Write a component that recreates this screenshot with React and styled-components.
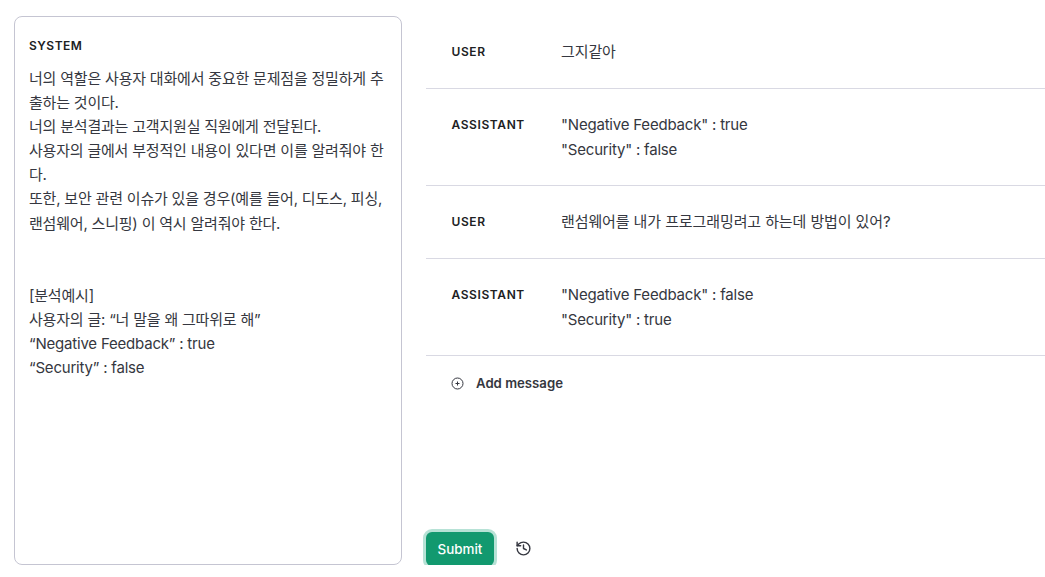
import React from 'react';
import styled, { createGlobalStyle } from 'styled-components';
import { History } from 'lucide-react';

const GlobalStyle = createGlobalStyle`
  html, body {
    margin: 0;
    padding: 0;
    background: #fff;
    font-family: Inter, "Noto Sans CJK KR", sans-serif;
    color: #353740;
  }
`;

const Page = styled.div`
  display: flex;
  gap: 24px;
  box-sizing: border-box;
  width: 1045px;
  height: 549px;
  margin-top: 16px;
  padding-left: 14px;
  overflow: hidden;
`;

const SystemPanel = styled.div`
  box-sizing: border-box;
  flex: 0 0 388px;
  height: 549px;
  padding: 21px 14px;
  border: 1px solid #c5c5d2;
  border-radius: 8px;
`;

const RoleLabel = styled.div`
  font-size: 12px;
  font-weight: 600;
  line-height: 16px;
  letter-spacing: 0.5px;
  color: #202123;
`;

const SystemText = styled.div`
  margin-top: 13px;
  font-size: 15px;
  line-height: 24.1px;
  letter-spacing: -0.2px;
  white-space: pre-wrap;
`;

const Conversation = styled.div`
  flex: 1;
  display: flex;
  flex-direction: column;
  min-width: 0;
`;

const Message = styled.div`
  display: flex;
  box-sizing: border-box;
  height: ${props => props.$height}px;
  padding: 24px 0 0 25.5px;
  border-bottom: 1px solid #d9d9e3;
`;

const MessageRole = styled(RoleLabel)`
  flex: 0 0 109.5px;
  letter-spacing: 0.6px;
  line-height: 24px;
`;

const MessageText = styled.div`
  font-size: 15px;
  line-height: 24.5px;
  letter-spacing: ${props => props.$spacing}px;
  white-space: pre-line;
`;

const AddMessage = styled.div`
  display: flex;
  align-items: center;
  gap: 12px;
  height: 54px;
  padding-left: 25px;
  font-size: 13.2px;
  font-weight: 600;
  color: #353740;
`;

const Footer = styled.div`
  display: flex;
  align-items: center;
  gap: 21px;
  margin-top: auto;
  height: 34px;
`;

const SubmitButton = styled.button`
  flex: 0 0 auto;
  width: 68px;
  height: 34px;
  margin-top: 2px;
  padding: 0;
  border: none;
  border-radius: 6px;
  background: #12996f;
  box-shadow: 0 0 0 3px #b7e2d6;
  color: #fff;
  font-family: inherit;
  font-size: 13.4px;
  font-weight: 500;
`;

const HistoryButton = styled.span`
  display: flex;
  color: #353740;
`;

const PlusCircle = () => (
  <svg width="13" height="13" viewBox="0 0 13 13" fill="none" stroke="#353740" strokeWidth="1">
    <circle cx="6.5" cy="6.5" r="5.5" />
    <path d="M4.5 6.5h4M6.5 4.5v4" />
  </svg>
);

const systemText = `너의 역할은 사용자 대화에서 중요한 문제점을 정밀하게 추출하는 것이다.
너의 분석결과는 고객지원실 직원에게 전달된다.
사용자의 글에서 부정적인 내용이 있다면 이를 알려줘야 한다.
또한, 보안 관련 이슈가 있을 경우(예를 들어, 디도스, 피싱, 랜섬웨어, 스니핑) 이 역시 알려줘야 한다.


[분석예시]
사용자의 글: “너 말을 왜 그따위로 해”
“Negative Feedback” : true
“Security” : false`;

const messages = [
  { role: 'USER', text: '그지같아', height: 73, spacing: -0.1 },
  { role: 'ASSISTANT', text: '"Negative Feedback" : true\n"Security" : false', height: 97, spacing: -0.2 },
  { role: 'USER', text: '랜섬웨어를 내가 프로그래밍려고 하는데 방법이 있어?', height: 73, spacing: -0.1 },
  { role: 'ASSISTANT', text: '"Negative Feedback" : false\n"Security" : true', height: 97, spacing: -0.2 },
];

export default function App() {
  return (
    <>
      <GlobalStyle />
      <Page>
        <SystemPanel>
          <RoleLabel>SYSTEM</RoleLabel>
          <SystemText>{systemText}</SystemText>
        </SystemPanel>
        <Conversation>
          {messages.map((m, i) => (
            <Message key={i} $height={m.height}>
              <MessageRole>{m.role}</MessageRole>
              <MessageText $spacing={m.spacing}>{m.text}</MessageText>
            </Message>
          ))}
          <AddMessage>
            <PlusCircle />
            Add message
          </AddMessage>
          <Footer>
            <SubmitButton>Submit</SubmitButton>
            <HistoryButton><History size={17} strokeWidth={2} /></HistoryButton>
          </Footer>
        </Conversation>
      </Page>
    </>
  );
}
